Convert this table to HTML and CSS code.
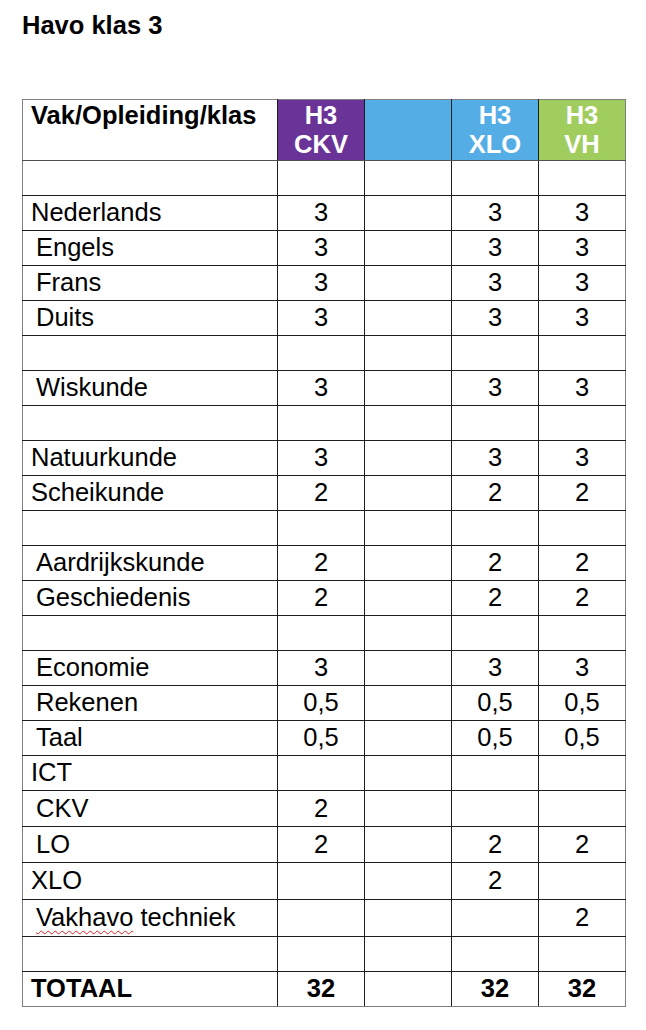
FILE: index.html
```html
<!DOCTYPE html>
<html lang="nl">
<head>
<meta charset="utf-8">
<title>Havo klas 3</title>
<link rel="stylesheet" href="styles.css">
</head>
<body>
<div class="page">
  <h1 class="title">Havo klas 3</h1>
  <table class="grid">
    <colgroup>
      <col class="c-vak">
      <col class="c-num">
      <col class="c-num">
      <col class="c-num">
      <col class="c-num">
    </colgroup>
    <thead>
      <tr class="head">
        <th class="h-vak">Vak/Opleiding/klas</th>
        <th class="h-ckv">H3<br>CKV</th>
        <th class="h-blue"></th>
        <th class="h-xlo">H3<br>XLO</th>
        <th class="h-vh">H3<br>VH</th>
      </tr>
    </thead>
    <tbody>
      <tr class="blank"><td></td><td></td><td></td><td></td><td></td></tr>
      <tr><td>Nederlands</td><td>3</td><td></td><td>3</td><td>3</td></tr>
      <tr><td class="ind">Engels</td><td>3</td><td></td><td>3</td><td>3</td></tr>
      <tr><td class="ind">Frans</td><td>3</td><td></td><td>3</td><td>3</td></tr>
      <tr><td class="ind">Duits</td><td>3</td><td></td><td>3</td><td>3</td></tr>
      <tr class="blank"><td></td><td></td><td></td><td></td><td></td></tr>
      <tr><td class="ind">Wiskunde</td><td>3</td><td></td><td>3</td><td>3</td></tr>
      <tr class="blank"><td></td><td></td><td></td><td></td><td></td></tr>
      <tr><td>Natuurkunde</td><td>3</td><td></td><td>3</td><td>3</td></tr>
      <tr><td>Scheikunde</td><td>2</td><td></td><td>2</td><td>2</td></tr>
      <tr class="blank"><td></td><td></td><td></td><td></td><td></td></tr>
      <tr><td class="ind">Aardrijkskunde</td><td>2</td><td></td><td>2</td><td>2</td></tr>
      <tr><td class="ind">Geschiedenis</td><td>2</td><td></td><td>2</td><td>2</td></tr>
      <tr class="blank"><td></td><td></td><td></td><td></td><td></td></tr>
      <tr><td class="ind">Economie</td><td>3</td><td></td><td>3</td><td>3</td></tr>
      <tr><td class="ind">Rekenen</td><td>0,5</td><td></td><td>0,5</td><td>0,5</td></tr>
      <tr><td class="ind">Taal</td><td>0,5</td><td></td><td>0,5</td><td>0,5</td></tr>
      <tr><td>ICT</td><td></td><td></td><td></td><td></td></tr>
      <tr class="mid"><td class="ind">CKV</td><td>2</td><td></td><td></td><td></td></tr>
      <tr class="mid"><td class="ind">LO</td><td>2</td><td></td><td>2</td><td>2</td></tr>
      <tr class="tall"><td>XLO</td><td></td><td></td><td>2</td><td></td></tr>
      <tr class="tall"><td class="ind"><span class="spell">Vakhavo</span> techniek</td><td></td><td></td><td></td><td>2</td></tr>
      <tr class="blank"><td></td><td></td><td></td><td></td><td></td></tr>
      <tr class="total"><td>TOTAAL</td><td>32</td><td></td><td>32</td><td>32</td></tr>
    </tbody>
  </table>
</div>
</body>
</html>
```
FILE: styles.css
```css
html, body {
  margin: 0;
  padding: 0;
  background: #ffffff;
}

body {
  font-family: "Liberation Sans", Arial, sans-serif;
  color: #000000;
}

.page {
  padding: 10px 0 0 22px;
}

.title {
  margin: 0 0 59px 0;
  font-size: 25.5px;
  line-height: 30px;
  font-weight: bold;
}

.grid {
  border-collapse: collapse;
  table-layout: fixed;
  width: 602px;
  border: 1px solid #808080;
}

.c-vak { width: 255px; }
.c-num { width: 87px; }

.grid td,
.grid th {
  border: 1px solid #1e1e1e;
  padding: 0 0 2px 0;
  font-size: 25.5px;
  height: 32px;
  line-height: 28px;
  text-align: center;
  vertical-align: middle;
}

.grid tr > :first-child {
  text-align: left;
  padding-left: 8px;
  border-left-color: #808080;
}

.grid tr > :last-child {
  border-right-color: #808080;
}

.grid td.ind {
  padding-left: 13px;
}

.head th {
  height: 59px;
  line-height: 29px;
  vertical-align: top;
  padding-top: 1px;
  padding-bottom: 0;
  font-weight: bold;
  color: #ffffff;
  border-top-color: #808080;
  border-bottom-color: #505050;
}

.head th.h-vak {
  color: #000000;
  background: #ffffff;
}

.h-ckv { background: #6a3398; }
.h-blue { background: #55ade6; }
.h-xlo { background: #55ade6; }
.h-vh { background: #a1cd5f; }

.grid tr.mid td {
  height: 33px;
}

.grid tr.tall td {
  height: 34px;
}

.grid tr.total td {
  font-weight: bold;
  border-bottom-color: #808080;
}

.spell {
  text-decoration: underline wavy #e02020;
  text-decoration-thickness: 1px;
  text-underline-offset: 4px;
  text-decoration-skip-ink: none;
}
```
